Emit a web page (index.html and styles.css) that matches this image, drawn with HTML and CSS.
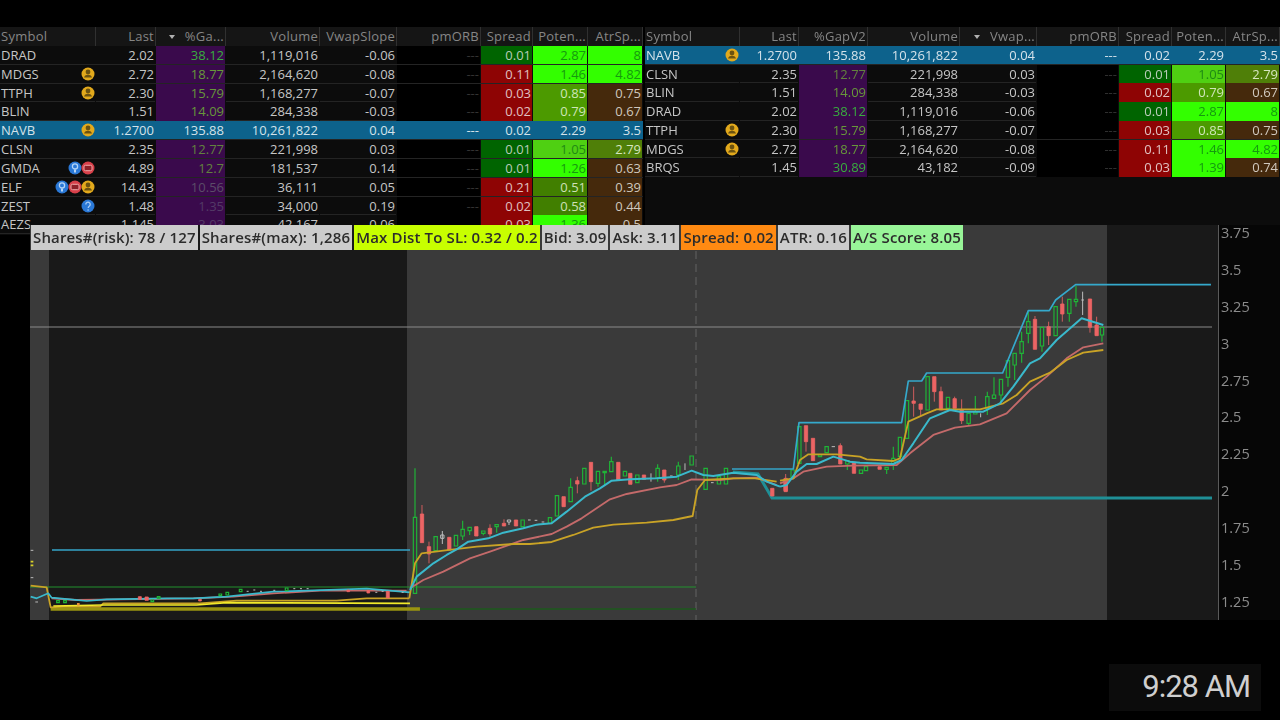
FILE: index.html
```html
<!DOCTYPE html>
<html lang="en">
<head>
    <meta charset="UTF-8">
    <meta name="viewport" content="width=device-width, initial-scale=1.0">
    <title>Watchlists and chart</title>
    <link rel="stylesheet" href="styles.css">
</head>
<body>
    <svg class="icon-defs" width="0" height="0">
        <symbol id="i-gold" viewBox="0 0 14 14">
            <circle cx="7" cy="7" r="6.5" fill="#e2a91c"/>
            <circle cx="7" cy="5" r="2.4" fill="#6b5210"/>
            <path d="M3 10.500c.6-2 2.200-2.700 4-2.700s3.400.7 4 2.700z" fill="#6b5210"/>
        </symbol>
        <symbol id="i-help" viewBox="0 0 14 14">
            <circle cx="7" cy="7" r="6.500" fill="#2a78d6"/>
            <path d="M4.800 5.400a2.200 2.200 0 1 1 3.600 1.700c-.8.6-1.200 1-1.200 2" fill="none" stroke="#a9cdf5" stroke-width="1.300"/>
            <circle cx="7.100" cy="11" r=".8" fill="#a9cdf5"/>
        </symbol>
        <symbol id="i-bulb" viewBox="0 0 14 14">
            <circle cx="7" cy="7" r="6.500" fill="#2a78d6"/>
            <circle cx="7" cy="5.400" r="2.600" fill="none" stroke="#b4d4f6" stroke-width="1.300"/>
            <path d="M6 8.500h2v3H6z" fill="#b4d4f6"/>
        </symbol>
        <symbol id="i-red" viewBox="0 0 14 14">
            <circle cx="7" cy="7" r="6.500" fill="#d8404a"/>
            <rect x="3" y="4.300" width="8" height="5.400" rx="1.500" fill="#8e2028" stroke="#f0a8a8" stroke-width="1"/>
        </symbol>
    </svg>

    <div class="screen">
        <div class="lists">
            <div class="watchlist list-left">
                <div class="row head">
                    <div class="sym">Symbol</div><div>Last</div><div><i class="sort"></i>%Ga...</div><div>Volume</div><div>VwapSlope</div><div>pmORB</div><div>Spread</div><div>Poten...</div><div>AtrSp...</div>
                </div>
                <div class="row">
                    <div class="sym">DRAD</div><div>2.02</div><div class="gap g-hi">38.12</div><div>1,119,016</div><div>-0.06</div><div class="orb">---</div><div class="sp-g">0.01</div><div class="hot">2.87</div><div class="hot">8</div>
                </div>
                <div class="row">
                    <div class="sym">MDGS<span class="icons"><svg><use href="#i-gold"/></svg></span></div><div>2.72</div><div class="gap g-mid">18.77</div><div>2,164,620</div><div>-0.08</div><div class="orb">---</div><div class="sp-r">0.11</div><div class="hot">1.46</div><div class="hot">4.82</div>
                </div>
                <div class="row">
                    <div class="sym">TTPH<span class="icons"><svg><use href="#i-gold"/></svg></span></div><div>2.30</div><div class="gap g-mid">15.79</div><div>1,168,277</div><div>-0.07</div><div class="orb">---</div><div class="sp-r">0.03</div><div class="warm">0.85</div><div class="brown">0.75</div>
                </div>
                <div class="row">
                    <div class="sym">BLIN</div><div>1.51</div><div class="gap g-mid">14.09</div><div>284,338</div><div>-0.03</div><div class="orb">---</div><div class="sp-r">0.02</div><div class="warm">0.79</div><div class="brown">0.67</div>
                </div>
                <div class="row picked">
                    <div class="sym">NAVB<span class="icons"><svg><use href="#i-gold"/></svg></span></div><div>1.2700</div><div>135.88</div><div>10,261,822</div><div>0.04</div><div>---</div><div>0.02</div><div>2.29</div><div>3.5</div>
                </div>
                <div class="row">
                    <div class="sym">CLSN</div><div>2.35</div><div class="gap g-low">12.77</div><div>221,998</div><div>0.03</div><div class="orb">---</div><div class="sp-g">0.01</div><div class="bright">1.05</div><div class="olive">2.79</div>
                </div>
                <div class="row">
                    <div class="sym">GMDA<span class="icons"><svg><use href="#i-bulb"/></svg><svg><use href="#i-red"/></svg></span></div><div>4.89</div><div class="gap g-low">12.7</div><div>181,537</div><div>0.14</div><div class="orb">---</div><div class="sp-g">0.01</div><div class="hot">1.26</div><div class="brown">0.63</div>
                </div>
                <div class="row">
                    <div class="sym">ELF<span class="icons"><svg><use href="#i-bulb"/></svg><svg><use href="#i-red"/></svg><svg><use href="#i-gold"/></svg></span></div><div>14.43</div><div class="gap g-dim">10.56</div><div>36,111</div><div>0.05</div><div class="orb">---</div><div class="sp-r">0.21</div><div class="dull">0.51</div><div class="brown">0.39</div>
                </div>
                <div class="row">
                    <div class="sym">ZEST<span class="icons"><svg><use href="#i-help"/></svg></span></div><div>1.48</div><div class="gap g-faint">1.35</div><div>34,000</div><div>0.19</div><div class="orb">---</div><div class="sp-r">0.02</div><div class="dull">0.58</div><div class="brown">0.44</div>
                </div>
                <div class="row">
                    <div class="sym">AEZS</div><div>1.145</div><div class="gap g-faint">3.03</div><div>42,167</div><div>0.06</div><div class="orb">---</div><div class="sp-r">0.03</div><div class="hot">1.36</div><div class="brown">0.5</div>
                </div>
            </div>

            <div class="watchlist list-right">
                <div class="row head">
                    <div class="sym">Symbol</div><div>Last</div><div>%GapV2</div><div>Volume</div><div><i class="sort"></i>Vwap...</div><div>pmORB</div><div>Spread</div><div>Poten...</div><div>AtrSp...</div>
                </div>
                <div class="row picked">
                    <div class="sym">NAVB<span class="icons"><svg><use href="#i-gold"/></svg></span></div><div>1.2700</div><div>135.88</div><div>10,261,822</div><div>0.04</div><div>---</div><div>0.02</div><div>2.29</div><div>3.5</div>
                </div>
                <div class="row">
                    <div class="sym">CLSN</div><div>2.35</div><div class="gap g-low">12.77</div><div>221,998</div><div>0.03</div><div class="orb">---</div><div class="sp-g">0.01</div><div class="bright">1.05</div><div class="olive">2.79</div>
                </div>
                <div class="row">
                    <div class="sym">BLIN</div><div>1.51</div><div class="gap g-mid">14.09</div><div>284,338</div><div>-0.03</div><div class="orb">---</div><div class="sp-r">0.02</div><div class="warm">0.79</div><div class="brown">0.67</div>
                </div>
                <div class="row">
                    <div class="sym">DRAD</div><div>2.02</div><div class="gap g-hi">38.12</div><div>1,119,016</div><div>-0.06</div><div class="orb">---</div><div class="sp-g">0.01</div><div class="hot">2.87</div><div class="hot">8</div>
                </div>
                <div class="row">
                    <div class="sym">TTPH<span class="icons"><svg><use href="#i-gold"/></svg></span></div><div>2.30</div><div class="gap g-mid">15.79</div><div>1,168,277</div><div>-0.07</div><div class="orb">---</div><div class="sp-r">0.03</div><div class="warm">0.85</div><div class="brown">0.75</div>
                </div>
                <div class="row">
                    <div class="sym">MDGS<span class="icons"><svg><use href="#i-gold"/></svg></span></div><div>2.72</div><div class="gap g-mid">18.77</div><div>2,164,620</div><div>-0.08</div><div class="orb">---</div><div class="sp-r">0.11</div><div class="hot">1.46</div><div class="hot">4.82</div>
                </div>
                <div class="row">
                    <div class="sym">BRQS</div><div>1.45</div><div class="gap g-hi">30.89</div><div>43,182</div><div>-0.09</div><div class="orb">---</div><div class="sp-r">0.03</div><div class="hot">1.39</div><div class="brown">0.74</div>
                </div>
            </div>
        </div>

        <div class="chart">
            <div class="plot">
                <svg class="plot-svg" viewBox="30 225 1188 395" width="1188" height="395">
                    <rect x="30" y="225" width="1188" height="395" fill="#191919"/>
                    <rect x="30" y="225" width="19" height="395" fill="#3a3a3a"/>
                    <rect x="407" y="225" width="700" height="395" fill="#3a3a3a"/>

                    <path class="ln-grid" d="M30 327H1212"/>
                    <path class="ln-dash" d="M696 225V620"/>
                    <path class="ln-green" d="M30 587H696"/>
                    <path class="ln-dkgreen" d="M410 609H696"/>
                    <path class="ln-sky" d="M52 550H410"/>
                    <path class="ln-teal" d="M733 472L758 474L772 498H1212"/>
                    <path class="ln-sky" d="M732 469H780"/>

                    <!-- premarket, coords from a 3x crop at 20,530 -->
                    <g transform="translate(20 530) scale(.3333)">
                        <path class="ln-olive" d="M92 237H1200"/>
                        <polyline class="ln-gold" points="32,167 80,172 92,232 130,230 240,230 250,220 540,220 650,212 950,212 1040,205 1168,205"/>
                        <polyline class="ln-lemon" points="100,228 250,225 530,225 620,218 1170,220"/>
                        <polyline class="ln-rose" points="95,205 170,210 300,208 520,205 640,200 760,190 900,182 1160,182"/>
                        <polyline class="ln-cyan thin" points="32,200 50,205 85,190 95,203 150,208 200,213 260,208 440,205 520,205 620,200 760,185 1040,176 1170,187"/>
                        <path class="c-green" d="M110 212h8v6h-8zM131 212h8v6h-8zM393 210h8v5h-8zM412 200h8v5h-8zM597 192h8v5h-8zM618 187h8v8h-8zM658 178h8v7h-8zM796 174h8v8h-8z"/>
                        <path class="c-red" d="M355 200h9v8h-9zM375 201h10v10h-10zM536 208h8v5h-8zM981 180h8v5h-8zM1041 181h8v8h-8zM1099 184h9v20h-9z"/>
                        <path class="c-orange" d="M171 219h8v8h-8z"/>
                        <path class="c-grey" d="M32 61h8M32 143h8M46 216h8M680 184h6M700 180h6M720 184h6M760 181h6M820 176h6M840 176h6M860 176h6M1066 187h6M1085 184h6M1145 187h6"/>
                        <path class="c-lemon" d="M32 95h8M32 106h8"/>
                    </g>

                    <!-- open to about 10:00, coords from a 3x crop at 400,430 -->
                    <g transform="translate(400 430) scale(.3333)">
                        <path class="c-green" d="M40 262h10V490h-10zM45 115V262M102 320h10V362h-10zM163 316h10V348h-10zM183 298h10V318h-10zM188 272V298M188 318V330M204 292h10V302h-10zM209 302V315M245 303h10V310h-10zM250 310V316M285 284h10V290h-10zM290 290V308M363 270h10V290h-10zM445 263h10V280h-10zM466 197h10V258h-10zM507 172h10V215h-10zM512 145V172M548 115h10V162h-10zM589 124h10V160h-10zM594 160V170M609 124h10V128h-10zM614 128V165M629 95h10V125h-10zM634 80V95M670 124h10V138h-10zM707 135h10V158h-10zM768 115h10V145h-10zM773 103V115M773 145V155M830 108h10V135h-10zM835 95V108M835 135V150M870 78h10V105h-10zM912 115h10V178h-10zM952 140h10V162h-10zM973 115h10V162h-10z"/>
                        <path class="c-red" d="M61 252h10V338h-10zM66 225V252M82 350h10V372h-10zM87 335V350M87 372V400M143 322h10V360h-10zM224 290h10V318h-10zM265 295h10V312h-10zM270 283V295M270 312V320M307 280h10V288h-10zM312 268V280M343 270h10V288h-10zM486 200h10V230h-10zM527 152h10V162h-10zM532 140V190M568 97h10V155h-10zM573 155V182M650 97h10V150h-10zM686 130h10V163h-10zM727 135h10V148h-10zM788 120h10V150h-10zM793 150V158M1112 175h10V198h-10zM1152 145h10V182h-10z"/>
                        <path class="c-grey" d="M122 315h10V325h-10zM127 303V342M322 270h10V276h-10zM327 276V285M384 270h8M404 271h8M425 276h8M753 130V155M810 138h8M855 100V120M933 158h8"/>
                        <polyline class="ln-rose" points="30,475 70,450 130,425 210,385 270,365 370,330 455,312 500,290 545,265 630,208 680,192 780,172 830,165 875,148 960,150 1000,145 1070,143 1130,165"/>
                        <polyline class="ln-gold" points="28,505 45,400 65,370 130,362 230,350 340,342 390,342 455,336 520,315 580,293 640,284 740,278 820,270 878,258 892,180 915,150 1000,145 1065,145 1130,155"/>
                        <polyline class="ln-cyan" points="30,480 50,440 100,400 140,375 170,358 205,335 265,325 310,308 370,295 410,284 455,280 500,245 555,200 600,175 635,152 690,148 770,145 830,140 875,122 910,135 940,138 1000,128 1070,135 1100,155 1140,170"/>
                    </g>

                    <!-- rest of the session, coords from a 3x crop at 780,270 -->
                    <g transform="translate(780 270) scale(.3333)">
                        <path class="c-green" d="M33 600h10V625h-10zM53 470h10V580h-10zM115 555h10V560h-10zM135 530h10V548h-10zM197 572h10V582h-10zM202 582V600M238 600h10V610h-10zM253 590h10V602h-10zM315 592h10V598h-10zM320 598V612M335 565h10V582h-10zM340 530V565M340 582V600M355 502h10V560h-10zM376 392h10V505h-10zM438 320h10V420h-10zM499 382h10V415h-10zM561 430h10V460h-10zM566 460V468M581 425h10V432h-10zM586 378V425M617 380h10V415h-10zM622 365V380M622 415V435M637 375h10V385h-10zM642 322V375M658 328h10V375h-10zM663 375V395M679 272h10V322h-10zM684 322V350M699 250h10V285h-10zM704 285V330M720 215h10V250h-10zM725 185V215M725 250V278M740 155h10V190h-10zM745 125V155M745 190V220M781 172h10V228h-10zM786 228V245M822 110h10V197h-10zM863 88h10V130h-10zM868 130V155M883 88h10V95h-10zM888 48V88M888 95V110M961 172h10V195h-10zM966 195V215"/>
                        <path class="c-red" d="M12 628h10V665h-10zM17 612V628M73 467h10V515h-10zM78 515V545M94 505h10V572h-10zM176 527h10V582h-10zM181 520V527M217 577h10V610h-10zM294 590h10V598h-10zM396 393h10V400h-10zM401 350V393M401 400V440M417 402h10V418h-10zM422 418V440M458 320h10V365h-10zM463 365V395M478 365h10V420h-10zM483 350V365M519 386h10V415h-10zM524 380V386M540 420h10V452h-10zM545 388V420M545 452V462M760 148h10V238h-10zM765 138V148M801 170h10V197h-10zM806 155V170M806 197V225M842 102h10V132h-10zM847 80V102M847 132V155M925 87h10V172h-10zM930 172V188M945 165h10V197h-10zM950 140V165"/>
                        <path class="c-grey" d="M155 530h10M602 430V442M908 65V135M904 90h8"/>
                        <polyline class="ln-rose" points="0,640 40,625 70,605 140,590 220,587 350,585 390,550 460,495 525,473 600,463 680,430 750,360 800,320 860,265 910,232 970,220"/>
                        <polyline class="ln-gold" points="0,632 40,625 60,570 85,553 170,553 240,560 260,568 340,573 360,565 385,455 440,430 470,418 600,418 670,400 710,375 750,335 810,308 860,270 910,248 970,240"/>
                        <polyline class="ln-cyan" points="0,650 20,645 50,605 80,582 110,582 160,560 210,575 240,578 340,582 365,570 400,520 450,445 510,420 540,425 610,425 660,400 700,350 750,280 780,265 830,210 905,145 970,165"/>
                        <polyline class="ln-step" points="0,597 40,597 57,458 365,458 385,333 425,333 440,309 668,309 745,122 808,122 827,90 887,44 1293,44"/>
                    </g>
                </svg>

                <div class="bubbles">
                    <span class="bubble">Shares#(risk): 78 / 127</span>
                    <span class="bubble">Shares#(max): 1,286</span>
                    <span class="bubble lime">Max Dist To SL: 0.32 / 0.2</span>
                    <span class="bubble">Bid: 3.09</span>
                    <span class="bubble">Ask: 3.11</span>
                    <span class="bubble orange">Spread: 0.02</span>
                    <span class="bubble">ATR: 0.16</span>
                    <span class="bubble mint">A/S Score: 8.05</span>
                </div>
            </div>
            <div class="axis">
                <span>3.75</span><span>3.5</span><span>3.25</span><span>3</span><span>2.75</span><span>2.5</span><span>2.25</span><span>2</span><span>1.75</span><span>1.5</span><span>1.25</span>
            </div>
        </div>

        <div class="footer">
            <div class="clock">9:28 AM</div>
        </div>
    </div>
</body>
</html>
```

FILE: styles.css
```css
:root {
    --text: #c6c6c6;
    --head-text: #868686;
    --line: #242424;
    --panel: #0c0c0c;
    --picked: #0d628c;
    --purple: #3a0a4c;
}

* {
    margin: 0;
    padding: 0;
    box-sizing: border-box;
}

body {
    background-color: #000;
    color: var(--text);
    font-family: "Open Sans", "Noto Sans", sans-serif;
    font-size: 13px;
    height: 720px;
    overflow: hidden;
}

.icon-defs {
    position: absolute;
}

.screen {
    padding-top: 27px;
    filter: blur(0.45px);
}

/* watchlists */
.lists {
    display: flex;
    gap: 2px;
    height: 208px;
}

.watchlist {
    background-color: var(--panel);
    overflow: hidden;
}

.list-left {
    width: 643px;
    --cols: 96px 60px 70px 94px 77px 84px 52px 55px 55px;
    --row-h: 18.82px;
}

.list-right {
    width: 635px;
    --cols: 95px 59px 69px 92px 77px 82px 53px 54px 54px;
    --row-h: 18.72px;
}

.row {
    display: grid;
    grid-template-columns: var(--cols);
    height: var(--row-h);
    line-height: 18.4px;
    border-bottom: 1px solid var(--line);
}

.row > div {
    text-align: right;
    padding-right: 2px;
    white-space: nowrap;
    box-shadow: inset -1px 0 0 #0c0c0c;
}

.row > .sym {
    text-align: left;
    padding-left: 1px;
    position: relative;
}

.head {
    height: 19px;
    line-height: 19px;
    background-color: #151515;
    color: var(--head-text);
    border-bottom: none;
    letter-spacing: 0.25px;
}

.head > div {
    box-shadow: inset -1px 0 0 #303030;
}

.sort {
    display: inline-block;
    width: 0;
    height: 0;
    margin-right: 10px;
    vertical-align: 2px;
    border-left: 3px solid transparent;
    border-right: 3px solid transparent;
    border-top: 4px solid #b0b0b0;
}

.picked {
    background-color: var(--picked);
    color: #d4e2ea;
}

.picked > div {
    box-shadow: none;
}

.icons {
    position: absolute;
    right: 1px;
    top: 2px;
    display: flex;
}

.icons svg {
    width: 14px;
    height: 14px;
    margin-left: -1px;
}

.gap { background-color: var(--purple); }
.g-hi { color: #38ad3e; }
.g-mid { color: #67983a; }
.g-low { color: #62823e; }
.g-dim { color: #5b4d68; }
.g-faint { color: #533a66; }

.orb { color: #333; background-color: #000; }
.sp-g { background-color: #006400; color: #b9ccb9; }
.sp-r { background-color: #8e0404; color: #e0c0c0; }
.hot { background-color: #33ff00; color: #159a0f; }
.bright { background-color: #4fd012; color: #1f8a14; }
.warm { background-color: #4c9a00; color: #cfe6b8; }
.dull { background-color: #417f00; color: #cfe0b8; }
.olive { background-color: #4f7f08; color: #d6e6c0; }
.brown { background-color: #45290c; color: #d0c8be; }

/* chart */
.chart {
    display: flex;
    position: relative;
    margin: -10px 0 0 30px;
    height: 395px;
}

.plot {
    width: 1188px;
    position: relative;
}

.plot-svg {
    display: block;
}

.bubbles {
    position: absolute;
    top: 0;
    left: 1px;
    display: flex;
    gap: 2px;
    height: 25px;
}

.bubble {
    background-color: #cccccc;
    color: #2c2c2c;
    font-weight: 600;
    font-size: 15px;
    letter-spacing: 0.15px;
    line-height: 25px;
    padding: 0 2px;
    white-space: nowrap;
}

.lime { background-color: #c8ff00; }
.orange { background-color: #ff8a12; }
.mint { background-color: #98f598; }

.axis {
    flex: 1;
    display: flex;
    flex-direction: column;
    justify-content: space-between;
    padding: 0 0 10px 2px;
    border-left: 1px solid #5a5a5a;
    background-color: #060606;
    color: #8c8c8c;
    font-size: 14.500px;
    line-height: 16px;
}

polyline, .plot-svg path {
    fill: none;
}

.ln-grid { stroke: #8a8a8a; stroke-width: 1; }
.ln-dash { stroke: #626262; stroke-width: 1; stroke-dasharray: 8 5; }
.ln-green { stroke: #23922f; stroke-width: 1; }
.ln-dkgreen { stroke: #1c5a1c; stroke-width: 1.500; }
.ln-sky { stroke: #35a5c8; stroke-width: 1.500; }
.ln-teal { stroke: #1f8f96; stroke-width: 3; }
.ln-step { stroke: #35a9cc; stroke-width: 5; stroke-linejoin: round; }
.ln-cyan { stroke: #3ab9cc; stroke-width: 6; stroke-linejoin: round; }
.ln-cyan.thin { stroke-width: 5; }
.ln-gold { stroke: #c9a326; stroke-width: 5.500; stroke-linejoin: round; }
.ln-rose { stroke: #c46a6a; stroke-width: 5.500; stroke-linejoin: round; }
.ln-lemon { stroke: #f2ea2a; stroke-width: 5; }
.ln-olive { stroke: #9a9410; stroke-width: 10; }

.plot-svg .c-green { stroke: #1fb437; stroke-width: 3.500; }
.plot-svg .c-red { fill: #ec6464; stroke: #ec6464; stroke-width: 2.500; }
.plot-svg .c-grey { stroke: #bdbdbd; stroke-width: 3; }
.plot-svg .c-orange { fill: #e8913a; }
.plot-svg .c-lemon { stroke: #d8d028; stroke-width: 5; }

/* timestamp */
.footer {
    display: flex;
    justify-content: flex-end;
    padding: 44px 19px 0 0;
}

.clock {
    width: 152px;
    height: 47px;
    padding-right: 11px;
    background-color: #0c0c0c;
    color: #cfcfcf;
    font-family: Roboto, sans-serif;
    font-size: 31px;
    letter-spacing: -1px;
    line-height: 45px;
    text-align: right;
}
```
